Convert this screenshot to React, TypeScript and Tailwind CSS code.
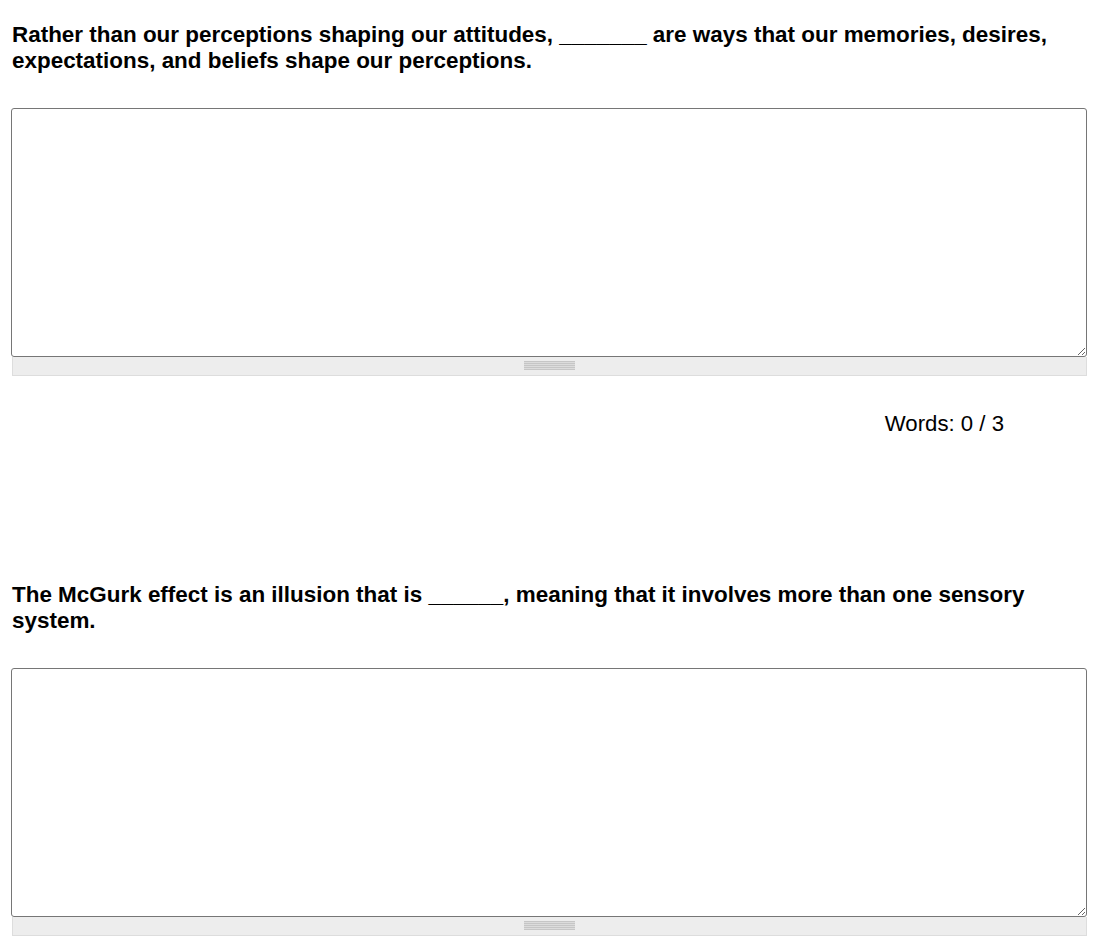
const Grip = () => (
  <div className="flex flex-col gap-[1px] w-[51px] bg-[#dcdcdc]">
    <div className="h-[1px] bg-[#c6c6c6]" />
    <div className="h-[1px] bg-[#c6c6c6]" />
    <div className="h-[1px] bg-[#c6c6c6]" />
    <div className="h-[1px] bg-[#c6c6c6]" />
    <div className="h-[1px] bg-[#c6c6c6]" />
  </div>
);

const AnswerBox = () => (
  <div className="flex flex-col">
    <textarea className="block w-full h-[249px] rounded-[3px] border border-[#767676] bg-white px-2 py-1 text-[16px] outline-none" />
    <div className="flex h-[19px] items-start justify-center pt-[4px] border border-t-0 border-[#dddddd] bg-[#ededed] ml-[1px]">
      <Grip />
    </div>
  </div>
);

const Question = ({ children }: { children: React.ReactNode }) => (
  <p className="pl-[1px] pr-[20px] text-[22.45px] font-bold leading-[26px] text-black">{children}</p>
);

export default function App() {
  return (
    <div className="min-h-screen bg-white font-['Liberation_Sans',Arial,sans-serif] text-black">
      <div className="w-[1076px] ml-[11px] pt-[22px]">
        <Question>
          Rather than our perceptions shaping our attitudes, _______ are ways that our memories, desires,
          expectations, and beliefs shape our perceptions.
        </Question>
        <div className="mt-[34px]">
          <AnswerBox />
        </div>
        <div className="mt-[35px] flex justify-end pr-[83px] text-[22.2px] leading-[25px]">Words: 0 / 3</div>
        <div className="mt-[146px]">
          <Question>
            The McGurk effect is an illusion that is ______, meaning that it involves more than one sensory
            system.
          </Question>
        </div>
        <div className="mt-[34px]">
          <AnswerBox />
        </div>
      </div>
    </div>
  );
}
